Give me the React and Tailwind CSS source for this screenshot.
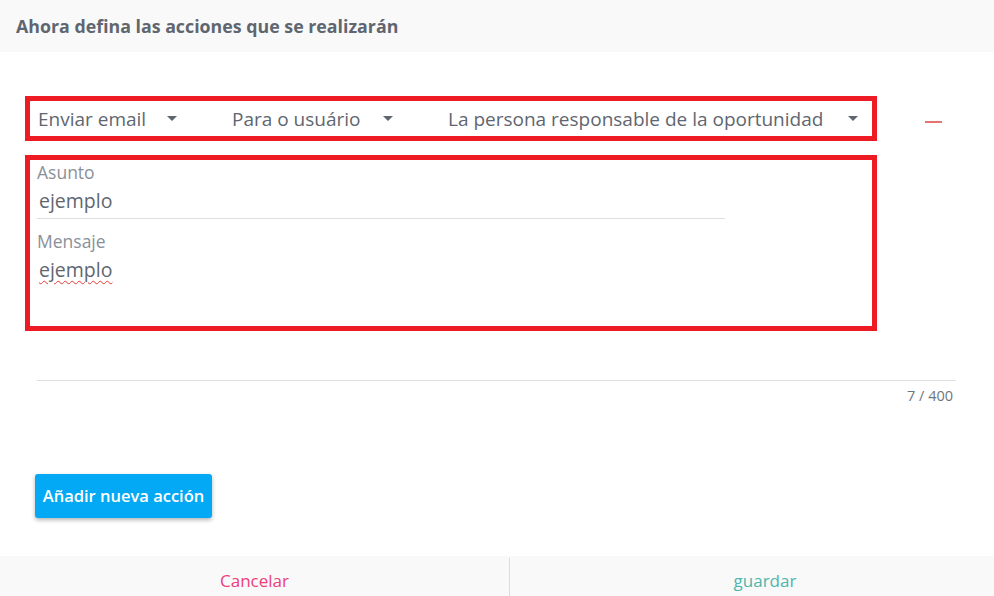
import { useState } from 'react'

function Caret() {
  return (
    <svg width="10" height="5" viewBox="0 0 10 5" className="shrink-0 fill-[#5f6670]">
      <path d="M0 0h10L5 5z" />
    </svg>
  )
}

function Select({ label, className }) {
  return (
    <div className={`flex items-center ${className}`}>
      <span className="text-[19px] leading-6 text-[#5f6670]">{label}</span>
      <span className="ml-auto"><Caret /></span>
    </div>
  )
}

export default function App() {
  const [subject, setSubject] = useState('ejemplo')
  const message = 'ejemplo'

  return (
    <div className="flex h-[596px] w-[994px] flex-col bg-white font-['Open_Sans',sans-serif]">
      <div className="flex h-[52px] items-center bg-[#f9f9f9] px-4">
        <h2 className="text-[17.8px] font-bold text-[#5f6670]">Ahora defina las acciones que se realizarán</h2>
      </div>

      <div className="flex flex-1 flex-col px-[25px] pt-[44px]">
        <div className="flex items-center">
          <div className="flex h-[45px] w-[852px] items-center border-[5px] border-[#ed1c24] pl-[8px] pr-[14px]">
            <Select label="Enviar email" className="w-[139px]" />
            <Select label="Para o usuário" className="ml-[55px] w-[161px]" />
            <Select label="La persona responsable de la oportunidad" className="ml-[55px] flex-1" />
          </div>
          <button type="button" className="ml-[48px] mt-[6px] flex h-6 w-[17px] items-center">
            <span className="block h-[2px] w-[17px] bg-[#e57373]" />
          </button>
        </div>

        <div className="mt-[14px] h-[176px] w-[852px] border-[5px] border-[#ed1c24] pl-[7px] pt-[1px]">
          <div className="w-[688px] border-b border-[#dddddd] pb-[4px]">
            <label className="block text-[17.5px] leading-[22px] text-[#8a9099]">Asunto</label>
            <input
              value={subject}
              onChange={(e) => setSubject(e.target.value)}
              className="mt-[5px] block h-[26px] w-full pl-[2px] text-[19.5px] leading-[26px] text-[#5f6670] outline-none"
            />
          </div>
          <label className="mt-[11px] block text-[17.5px] leading-[22px] text-[#8a9099]">Mensaje</label>
          <p className="mt-[5px] pl-[2px] text-[19.5px] leading-[26px] text-[#5f6670]">
            <span className="underline decoration-[#e53935] decoration-wavy decoration-1 underline-offset-[3px]">{message}</span>
          </p>
        </div>

        <div className="ml-[12px] mr-[13px] mt-[49px] border-t border-[#e0e0e0]" />
        <div className="mr-[16px] mt-[5px] text-right text-[14.5px] leading-5 text-[#70767e]">7 / 400</div>

        <div className="mt-[68px]">
          <button
            type="button"
            className="ml-[10px] h-[44px] w-[177px] rounded-[3px] bg-[#03a9f4] text-[16.5px] font-semibold text-white shadow-[0_2px_4px_rgba(0,0,0,0.3)]"
          >
            Añadir nueva acción
          </button>
        </div>
      </div>

      <div className="flex h-[40px] bg-[#f9f9f9]">
        <button type="button" className="w-[509px] pt-[10px] text-center text-[17px] leading-6 text-[#ec407a]">Cancelar</button>
        <div className="mt-[2px] w-px bg-[#dcdcdc]" />
        <button type="button" className="flex-1 pl-[26px] pt-[10px] text-center text-[17px] leading-6 text-[#4db6ac]">guardar</button>
      </div>
    </div>
  )
}
